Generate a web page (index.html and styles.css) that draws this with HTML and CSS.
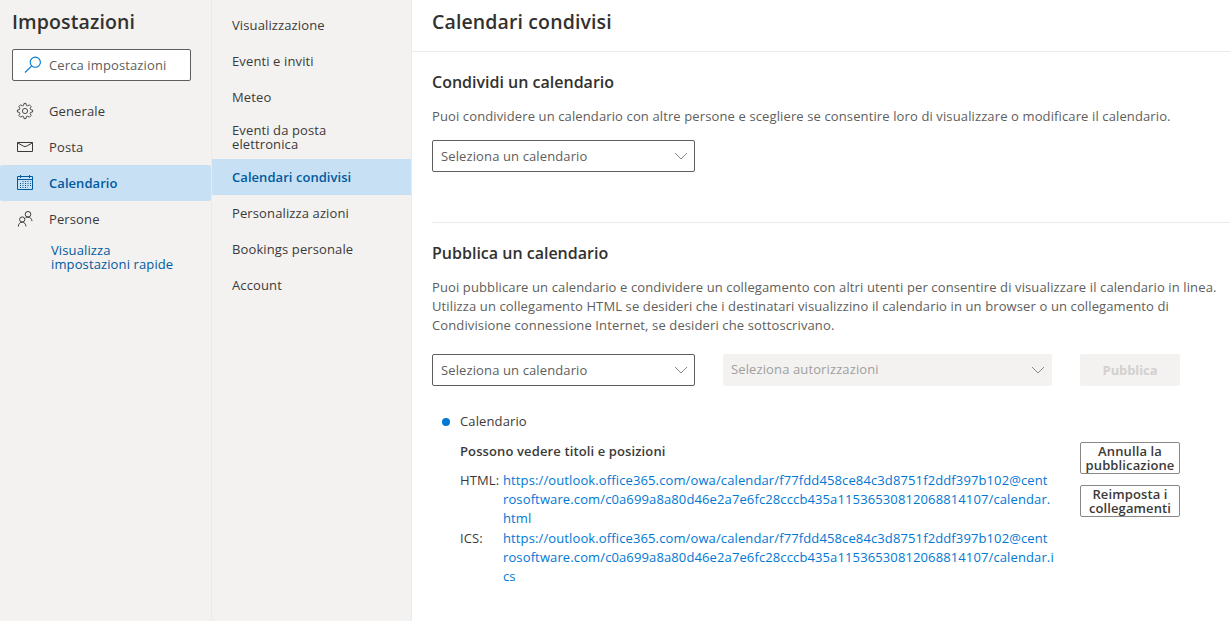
FILE: index.html
```html
<!DOCTYPE html>
<html lang="it">

<head>
    <meta charset="UTF-8">
    <meta name="viewport" content="width=device-width, initial-scale=1.0">
    <title>Impostazioni - Calendari condivisi</title>
    <link rel="stylesheet" href="styles.css">
</head>

<body>
    <div class="settings">
        <!-- Categories -->
        <div class="categories">
            <h1 class="title">Impostazioni</h1>
            <div class="search">
                <svg class="icon" width="18" height="18" viewBox="0 0 18 18">
                    <circle cx="11.3" cy="6.2" r="5.1" />
                    <path d="M7.7 9.8L1 16.5" />
                </svg>
                <span>Cerca impostazioni</span>
            </div>
            <nav>
                <a class="category" href="#">
                    <svg class="icon thin" width="18" height="18" viewBox="0 0 18 18">
                        <circle cx="9" cy="9" r="2.6" />
                        <path d="M8 1.4h2l.4 2 1.3.5 1.7-1.1 1.8 1.8-1.1 1.7.5 1.3 2 .4v2l-2 .4-.5 1.3 1.1 1.7-1.8 1.8-1.7-1.1-1.3.5-.4 2H8l-.4-2-1.3-.5-1.7 1.1-1.8-1.8 1.1-1.7-.5-1.3-2-.4V8l2-.4.5-1.3-1.1-1.7 1.8-1.8 1.7 1.1 1.3-.5z" />
                    </svg>
                    <span>Generale</span>
                </a>
                <a class="category" href="#">
                    <svg class="icon" width="18" height="18" viewBox="0 0 18 18">
                        <path d="M1.5 4.5h15v9h-15zM1.5 4.8l6 3.4q1.500.8 3 0l6-3.400" />
                    </svg>
                    <span>Posta</span>
                </a>
                <a class="category active" href="#">
                    <svg class="icon" width="18" height="18" viewBox="0 0 18 18">
                        <path d="M1.5 2.5h15v13h-15zM1.5 5.5h15M4.5 1v3M13.5 1v3" />
                        <path class="dots" d="M6.500 7.500h8M4 9.500h11M4 11.500h11M4 13.500h8" />
                    </svg>
                    <span>Calendario</span>
                </a>
                <a class="category" href="#">
                    <svg class="icon" width="18" height="18" viewBox="0 0 18 18">
                        <circle cx="12" cy="4.3" r="2.8" />
                        <circle cx="6.2" cy="9.5" r="2.6" />
                        <path d="M2.3 16.5c.2-2.600 1.700-4.400 3.900-4.400s3.300 1.700 3.800 4.200M9.500 7.900c.7-.5 1.500-.8 2.500-.8 2.200 0 3.800 1.700 4 4" />
                    </svg>
                    <span>Persone</span>
                </a>
                <a class="quick-link" href="#">Visualizza<br>impostazioni rapide</a>
            </nav>
        </div>

        <!-- Calendar options -->
        <nav class="options">
            <a class="option" href="#">Visualizzazione</a>
            <a class="option" href="#">Eventi e inviti</a>
            <a class="option" href="#">Meteo</a>
            <a class="option tall" href="#">Eventi da posta<br>elettronica</a>
            <a class="option active" href="#">Calendari condivisi</a>
            <a class="option" href="#">Personalizza azioni</a>
            <a class="option" href="#">Bookings personale</a>
            <a class="option" href="#">Account</a>
        </nav>

        <!-- Shared calendars -->
        <main class="content">
            <div class="header">
                <h1 class="title">Calendari condivisi</h1>
            </div>

            <section class="share">
                <h2>Condividi un calendario</h2>
                <p>Puoi condividere un calendario con altre persone e scegliere se consentire loro di visualizzare o modificare il calendario.</p>
                <div class="dropdown">
                    <span>Seleziona un calendario</span>
                    <svg class="chevron" width="14" height="8" viewBox="0 0 14 8"><path d="M1 1l6 6 6-6" /></svg>
                </div>
            </section>

            <section class="publish">
                <h2>Pubblica un calendario</h2>
                <p>Puoi pubblicare un calendario e condividere un collegamento con altri utenti per consentire di visualizzare il calendario in linea.<br>Utilizza un collegamento HTML se desideri che i destinatari visualizzino il calendario in un browser o un collegamento di<br>Condivisione connessione Internet, se desideri che sottoscrivano.</p>
                <div class="publish-row">
                    <div class="dropdown">
                        <span>Seleziona un calendario</span>
                        <svg class="chevron" width="14" height="8" viewBox="0 0 14 8"><path d="M1 1l6 6 6-6" /></svg>
                    </div>
                    <div class="dropdown disabled">
                        <span>Seleziona autorizzazioni</span>
                        <svg class="chevron" width="14" height="8" viewBox="0 0 14 8"><path d="M1 1l6 6 6-6" /></svg>
                    </div>
                    <button class="primary" disabled>Pubblica</button>
                </div>

                <div class="published">
                    <div class="dot"></div>
                    <div class="details">
                        <div class="name">Calendario</div>
                        <div class="permission">Possono vedere titoli e posizioni</div>
                        <div class="link-row">
                            <span class="label">HTML:</span>
                            <a class="link" href="#">https://outlook.office365.com/owa/calendar/f77fdd458ce84c3d8751f2ddf397b102@cent<br>rosoftware.com/c0a699a8a80d46e2a7e6fc28cccb435a11536530812068814107/calendar.<br>html</a>
                        </div>
                        <div class="link-row">
                            <span class="label">ICS:</span>
                            <a class="link" href="#">https://outlook.office365.com/owa/calendar/f77fdd458ce84c3d8751f2ddf397b102@cent<br>rosoftware.com/c0a699a8a80d46e2a7e6fc28cccb435a11536530812068814107/calendar.i<br>cs</a>
                        </div>
                    </div>
                    <div class="actions">
                        <button>Annulla la<br>pubblicazione</button>
                        <button>Reimposta i<br>collegamenti</button>
                    </div>
                </div>
            </section>
        </main>
    </div>
</body>

</html>
```
FILE: styles.css
```css
* {
    box-sizing: border-box;
}

body {
    margin: 0;
    font-family: "Open Sans", "Noto Sans", sans-serif;
    font-size: 13px;
    line-height: 14px;
    letter-spacing: 0.12px;
    color: #3b3a39;
    background-color: white;
    overflow: hidden;
}

h1,
h2,
p {
    margin: 0;
}

a {
    color: inherit;
    text-decoration: none;
}

.settings {
    display: flex;
    height: 621px;
    white-space: nowrap;
}

.title {
    font-size: 19.5px;
    line-height: 28px;
    font-weight: 600;
    color: #323130;
}

/* Categories */
.categories {
    width: 212px;
    flex-shrink: 0;
    background-color: #f3f2f1;
    border-right: 1px solid #eaeaea;
}

.categories .title {
    padding: 8px 12px 0;
}

.search {
    display: flex;
    align-items: center;
    gap: 7px;
    width: 179px;
    height: 32px;
    margin: 13px 12px 12px;
    padding-left: 11px;
    background-color: white;
    border: 1px solid #605e5c;
    border-radius: 2px;
    color: #605e5c;
}

.icon {
    flex-shrink: 0;
    fill: none;
    stroke: currentColor;
    stroke-width: 1;
}

.icon.thin {
    stroke-width: 0.9;
}

.search .icon {
    stroke: #0078d4;
    stroke-width: 1.1;
}

.category {
    display: flex;
    align-items: center;
    gap: 15px;
    height: 36px;
    padding-left: 16px;
    border-radius: 2px;
}

.dots {
    stroke-dasharray: 1 1.5;
}

.active {
    background-color: #c7e0f4;
    color: #005a9e;
    font-weight: 600;
    letter-spacing: 0.05px;
}

.quick-link {
    display: block;
    padding: 6px 0 0 51px;
    color: #005a9e;
}

/* Calendar options */
.options {
    width: 200px;
    flex-shrink: 0;
    padding-top: 7px;
    background-color: #f3f2f1;
    border-right: 1px solid #eaeaea;
}

.option {
    display: flex;
    align-items: center;
    height: 36px;
    padding-left: 20px;
}

.option.tall {
    height: 44px;
}

/* Shared calendars */
.content {
    flex: 1;
    min-width: 0;
}

.header {
    height: 52px;
    padding: 8px 20px;
    border-bottom: 1px solid #eaeaea;
}

h2 {
    font-size: 16px;
    line-height: 22px;
    font-weight: 600;
    letter-spacing: 0;
    color: #323130;
}

p {
    line-height: 19px;
    color: #605e5c;
}

.share {
    height: 171px;
    margin-left: 20px;
    padding-top: 19px;
    border-bottom: 1px solid #eaeaea;
}

.share p {
    margin: 14px 0;
}

.publish {
    margin-left: 20px;
    padding-top: 19px;
}

.publish p {
    margin: 14px 0 19px;
}

.dropdown {
    display: flex;
    align-items: center;
    justify-content: space-between;
    width: 263px;
    height: 32px;
    padding: 0 6px 0 8px;
    border: 1px solid #605e5c;
    border-radius: 2px;
    color: #605e5c;
}

.chevron {
    fill: none;
    stroke: #8a8886;
}

.publish-row {
    display: flex;
    gap: 28px;
}

.dropdown.disabled {
    width: 329px;
    padding: 0 6px 0 7px;
    background-color: #f3f2f1;
    border-color: #f3f2f1;
    color: #a19f9d;
}

.dropdown.disabled span {
    padding-bottom: 2px;
}

button {
    width: 100px;
    height: 32px;
    padding: 0;
    font: inherit;
    font-weight: 600;
    letter-spacing: 0.12px;
    color: #3b3a39;
    background-color: white;
    border: 1px solid #8a8886;
    border-radius: 2px;
}

.primary {
    background-color: #f3f2f1;
    border-color: #f3f2f1;
    color: #d2d0ce;
    font-weight: 700;
    letter-spacing: -0.1px;
}

.published {
    display: flex;
    padding-top: 26px;
}

.dot {
    width: 8px;
    height: 8px;
    margin: 6px 10px;
    border-radius: 50%;
    background-color: #0078d4;
}

.details {
    width: 620px;
    line-height: 19px;
}

.permission {
    margin: 11px 0 10px;
    font-weight: 600;
}

.link-row {
    display: flex;
    margin-bottom: 1px;
}

.label {
    width: 43px;
}

.link {
    color: #0078d4;
}

.actions {
    display: flex;
    flex-direction: column;
    gap: 11px;
    padding-top: 30px;
}
```
